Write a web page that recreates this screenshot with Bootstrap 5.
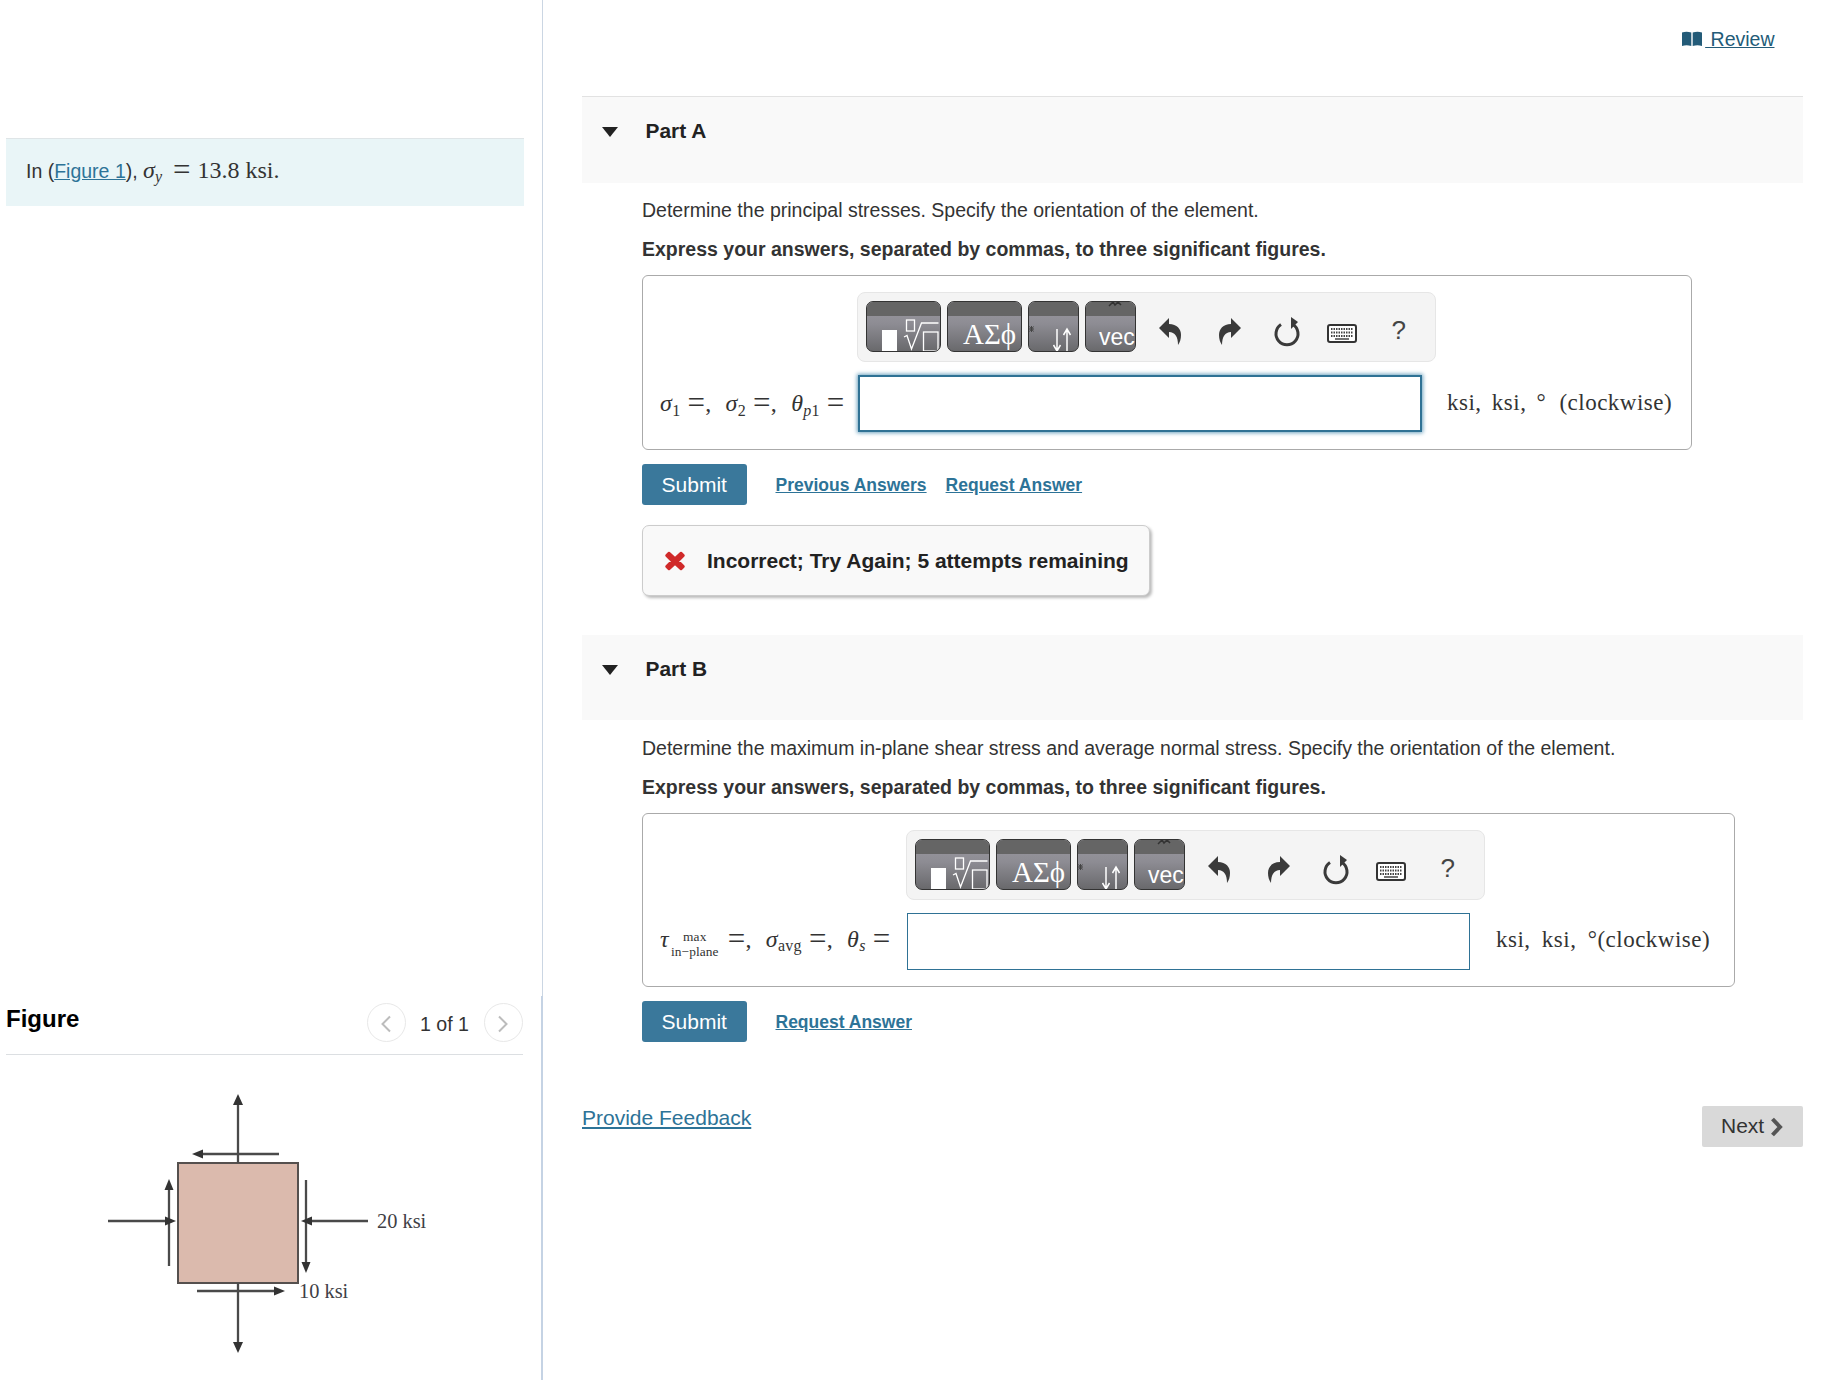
<!DOCTYPE html>
<html lang="en">
<head>
<meta charset="utf-8">
<title>Part A and Part B</title>
<link href="https://cdn.jsdelivr.net/npm/bootstrap@5.3.0/dist/css/bootstrap.min.css" rel="stylesheet">
<style>
html,body{height:1380px;overflow:hidden;background:#fff}
body{font-family:"Liberation Sans",Arial,sans-serif;font-size:19.5px;color:#333;line-height:28px}
a{color:#2d7397}
.shell{height:1380px}
.side{width:542.5px;flex:none}
.side-top{height:996px;border-right:1px solid #cbd6e3;padding:138px 18px 0 6px}
.intro{height:68px;background:#e9f5f7;border-top:1px solid #dfe5e7;padding:17px 0 0 20px;white-space:nowrap}
.mth{font-family:"Liberation Serif",serif;font-size:24px;color:#333}
.mth i{font-style:italic}
.mth sub{font-size:16px;bottom:-.28em}
.eqs{font-size:31px;line-height:0;vertical-align:-2px}
.intro .eqs{margin:0 1px 0 5px}
.side-fig{flex:1;border-right:2px solid #c5d3e4;padding:0 18px 0 6px}
.fig-head{height:59px;border-bottom:1px solid #dcdfe2}
.fig-title{font-size:24px;font-weight:700;color:#000;line-height:28px;margin-top:9px}
.pager{font-size:19.6px;color:#333;margin-top:7px}
.pg-btn{width:39px;height:39px;border:1px solid #e8e8e8;border-radius:50%;background:#fff;padding:0}
.pg-count{width:78px;text-align:center;padding-top:7px}
.fig-art{display:block;margin:25px 0 0 74px}
.fig-lbl{font-family:"Liberation Serif",serif;font-size:20.4px;fill:#3f3f46}
.mainc{flex:1;padding:0 37.500px 0 39.5px;min-width:0}
.rev-row{height:95.5px;padding:25px 28px 0 0}
.rev-row a{color:#235b78}
.rev-book{margin:0 3px 3px 0}
.part{background:#f9f9f9;height:87.5px;padding:20px 0 0 20px;font-weight:700;color:#222;font-size:20.9px}
.part-a{border-top:1px solid #e2e2e2}
.part-b{height:85px}
.part-b-gap{margin-top:39px}
.tri{width:16px;height:10px;margin:10px 27.5px 0 0;flex:none}
.body-w{padding-left:60px}
.ques{margin:13px 0 11px}
.ques-b{margin-top:14px}
.mathbox{border:1px solid #aaa;border-radius:6px;margin-top:12px;padding:16px 0 17px 17px;display:grid}
.box-a{width:1050px;grid-template-columns:198px 564px auto;height:175px}
.box-b{width:1092.5px;grid-template-columns:247px 563px auto;height:174px}
.tools{grid-column:2 / 4;justify-self:start;width:579px;height:70px;background:#f4f4f4;border:1px solid #e6e6e6;border-radius:8px;margin:0 0 12px -1px;padding:8px 0 0 8px;gap:6px}
.mq{position:relative;height:51px;border:1px solid #333;border-radius:7px;overflow:hidden;background:linear-gradient(#9c9aa2 0,#8d8c93 45%,#69696c 100%);color:#fff;flex:none}
.mq::before{content:"";display:block;height:14px;background:#656565}
.mq svg{position:absolute;left:0;top:0}
.mq-w{width:75px}
.mq-n{width:51px}
.mq-sym{position:absolute;left:15px;top:12px;font-family:"Liberation Serif",serif;font-size:29px;line-height:40px;white-space:nowrap}
.mq-vec{position:absolute;left:13px;top:18px;font-size:23px;line-height:34px}
.tool-i{flex:none;display:block;margin-top:16px}
.t-und{margin-left:17px}
.t-red{margin-left:31.5px}
.t-rst{margin-left:26px;margin-top:15px}
.t-kbd{margin:23px 0 0 20.5px}
.tool-q{font-size:26px;line-height:30px;color:#444;margin:14px 0 0 28.5px}
.anslbl{align-self:center;white-space:nowrap;letter-spacing:.3px}
.anslbl .sep{margin-right:14px}
.anslbl .eqs{margin-left:7px}
.ansinp{height:57px;border:1px solid #2f7295;background:#fff;display:block;width:100%}
.inp-focus{border-width:2px;box-shadow:0 0 4px 1px #6ca3c0}
.inp-b{height:57px;margin-top:1px}
.units{font-size:23px;align-self:center;margin-left:25px;white-space:nowrap;word-spacing:4px;letter-spacing:.5px}
.deg{margin:0 3px 0 10px}
.units-b{margin:0 0 3px 26px;word-spacing:5px;letter-spacing:.5px}
.tau-s{display:inline-flex;flex-direction:column;align-items:center;vertical-align:middle;font-size:13.4px;line-height:15px;margin:6px 0 0 2px;letter-spacing:.1px}
.tau-s+.eqs{margin-left:9px}
.act{margin-top:14px;height:41px}
.btn-sub{background:#3a789b;color:#fff;border:0;border-radius:3px;width:104.5px;height:41px;padding:0;font-size:21px}
.act a{font-size:17.5px;font-weight:700}
.act a+a{margin-left:19px}
.act .btn-sub{margin-right:29px}
.fb{display:inline-flex;align-items:center;margin-top:20px;width:508px;height:71px;background:#f9f9f9;border:1px solid #ccc;border-radius:7px;box-shadow:2px 2px 3px #bbb;font-weight:700;color:#222;padding-left:21px;font-size:21px}
.fb svg{margin-right:21px;flex:none}
.foot{margin-top:63.5px}
.foot a{font-size:21px;margin-top:-2px}
.btn-nx{background:#d9d9d9;color:#333;border:0;border-radius:2px;width:101px;height:41px;padding:0;font-size:21px}
</style>
</head>
<body>
<div class="shell d-flex">
  <aside class="side d-flex flex-column">
    <div class="side-top">
      <div class="intro">In (<a href="#">Figure 1</a>), <span class="mth"><i>σ<sub>y</sub></i> <span class="eqs">=</span> 13.8 ksi.</span></div>
    </div>
    <div class="side-fig">
      <div class="fig-head d-flex justify-content-between align-items-start">
        <div class="fig-title">Figure</div>
        <div class="pager d-flex">
          <button class="pg-btn" aria-label="Previous"><svg width="12" height="18" viewBox="0 0 12 18"><path d="M10 1.500 2.500 9 10 16.500" fill="none" stroke="#bcbcbc" stroke-width="2"/></svg></button>
          <div class="pg-count">1 of 1</div>
          <button class="pg-btn" aria-label="Next"><svg width="12" height="18" viewBox="0 0 12 18"><path d="M2 1.500 9.500 9 2 16.500" fill="none" stroke="#bcbcbc" stroke-width="2"/></svg></button>
        </div>
      </div>
      <svg class="fig-art" width="400" height="290" viewBox="0 0 400 290">
        <rect x="98" y="83" width="120" height="120" fill="#dbbaad" stroke="#55504e" stroke-width="2"/>
        <g stroke="#4a4a4a" stroke-width="2.300" fill="none">
          <path d="M158 83V20"/><path d="M158 203V268"/>
          <path d="M28 141H92"/><path d="M288 141H228"/>
          <path d="M120 74H199"/><path d="M197 211H117"/>
          <path d="M89 186V110"/><path d="M226 100V182"/>
        </g>
        <g fill="#333">
          <path d="M158 14l-5 11h10z"/><path d="M158 273l-5-11h10z"/>
          <path d="M96 141l-11-4.500v9z"/><path d="M221 141l11-4.500v9z"/>
          <path d="M112 74l11-4.500v9z"/><path d="M205 211l-11-4.500v9z"/>
          <path d="M89 99l-4.500 11h9z"/><path d="M226 193l-4.500-11h9z"/>
        </g>
        <text class="fig-lbl" x="297" y="148">20 ksi</text>
        <text class="fig-lbl" x="219" y="218">10 ksi</text>
      </svg>
    </div>
  </aside>

  <main class="mainc">
    <div class="rev-row text-end">
      <svg width="20" height="16" viewBox="0 0 20 16" class="rev-book"><path d="M0 1.500C3 .5 6 .5 9.300 1.500V15C6 14 3 14 0 15zM10.700 1.500C14 .5 17 .5 20 1.500V15C17 14 14 14 10.700 15z" fill="#235b78"/></svg><a href="#">&nbsp;Review</a>
    </div>

    <div class="part part-a d-flex align-items-start">
      <svg class="tri" viewBox="0 0 16 10"><path d="M0 0h16L8 10z" fill="#222"/></svg><span>Part A</span>
    </div>
    <div class="body-w">
      <p class="ques">Determine the principal stresses. Specify the orientation of the element.</p>
      <p class="mb-0 fw-bold">Express your answers, separated by commas, to three significant figures.</p>
      <div class="mathbox box-a">
        <div></div>
        <div class="tools d-flex">
          <div class="mq mq-w"><svg width="75" height="51" viewBox="0 0 75 51"><rect x="15" y="28" width="15" height="23" fill="#fff"/><g fill="none" stroke="#fff" stroke-width="1.300"><rect x="39.500" y="18" width="8" height="11"/><path d="M37 35l3-1.500 4.500 13.500L54.500 21H71.500"/><rect x="56.500" y="30" width="14.500" height="19"/></g></svg></div>
          <div class="mq mq-w"><div class="mq-sym">ΑΣϕ</div></div>
          <div class="mq mq-n"><svg width="51" height="51" viewBox="0 0 51 51"><g fill="none" stroke="#fff" stroke-width="1.500"><path d="M28 27v22M24.500 43l3.500 6 3.500-6"/><path d="M38 49V27M34.500 33l3.500-6 3.500 6"/></g><path d="M0 27h5M2.500 24v6M.5 24.500l4 5M4.500 24.500l-4 5" stroke="#444"/></svg></div>
          <div class="mq mq-n"><svg width="51" height="51" viewBox="0 0 51 51"><path d="M23 4l4-4 2 3 3-3 3 3" fill="none" stroke="#333" stroke-width="1.500"/></svg><div class="mq-vec">vec</div></div>
          <svg class="tool-i t-und" width="22" height="30" viewBox="0 0 22 30"><path d="M0 11 10 1v6c8 0 12 5 12 11 0 4-1 7-3 10 0-8-3-13-9-13v6z" fill="#3a3a3a"/></svg>
          <svg class="tool-i t-red" width="22" height="30" viewBox="0 0 22 30"><path d="M22 11 12 1v6C4 7 0 12 0 18c0 4 1 7 3 10 0-8 3-13 9-13v6z" fill="#3a3a3a"/></svg>
          <svg class="tool-i t-rst" width="28" height="34" viewBox="0 0 28 34"><path d="M8 8.500a11 11 0 1 0 12 0" fill="none" stroke="#3a3a3a" stroke-width="3"/><path d="M18 1v12l7-7z" fill="#3a3a3a"/></svg>
          <svg class="tool-i t-kbd" width="30" height="20" viewBox="0 0 30 20"><rect x="1" y="1" width="28" height="17" rx="2" fill="#fff" stroke="#333" stroke-width="2"/><path d="M4 5h22M4 8.500h22M4 12h22" stroke="#444" stroke-width="2" stroke-dasharray="1.500 1"/><path d="M8 15h14" stroke="#444" stroke-width="1.500"/></svg>
          <div class="tool-q">?</div>
        </div>
        <div class="anslbl mth"><i>σ</i><sub>1</sub><span class="eqs">=</span><span class="sep">,</span><i>σ</i><sub>2</sub><span class="eqs">=</span><span class="sep">,</span><i>θ<sub>p</sub></i><sub>1</sub><span class="eqs">=</span></div>
        <div class="ansinp inp-focus"></div>
        <div class="units mth">ksi, ksi,<span class="deg">°</span> (clockwise)</div>
      </div>
      <div class="act d-flex align-items-center">
        <button class="btn-sub">Submit</button>
        <a href="#">Previous Answers</a><a href="#">Request Answer</a>
      </div>
      <div class="fb">
        <svg width="22" height="22" viewBox="0 0 22 22"><path d="M5 3 11 8.500 17 3 19.500 5.500 14 11l5.500 5.500L17 19l-6-5.500L5 19l-2.500-2.500L8 11 2.500 5.500z" fill="#d02a2a" stroke="#d02a2a" stroke-width="2.500" stroke-linejoin="round"/></svg>
        Incorrect; Try Again; 5 attempts remaining
      </div>
    </div>

    <div class="part part-b part-b-gap d-flex align-items-start">
      <svg class="tri" viewBox="0 0 16 10"><path d="M0 0h16L8 10z" fill="#222"/></svg><span>Part B</span>
    </div>
    <div class="body-w">
      <p class="ques ques-b">Determine the maximum in-plane shear stress and average normal stress. Specify the orientation of the element.</p>
      <p class="mb-0 fw-bold">Express your answers, separated by commas, to three significant figures.</p>
      <div class="mathbox box-b">
        <div></div>
        <div class="tools d-flex">
          <div class="mq mq-w"><svg width="75" height="51" viewBox="0 0 75 51"><rect x="15" y="28" width="15" height="23" fill="#fff"/><g fill="none" stroke="#fff" stroke-width="1.300"><rect x="39.500" y="18" width="8" height="11"/><path d="M37 35l3-1.500 4.500 13.500L54.500 21H71.500"/><rect x="56.500" y="30" width="14.500" height="19"/></g></svg></div>
          <div class="mq mq-w"><div class="mq-sym">ΑΣϕ</div></div>
          <div class="mq mq-n"><svg width="51" height="51" viewBox="0 0 51 51"><g fill="none" stroke="#fff" stroke-width="1.500"><path d="M28 27v22M24.500 43l3.500 6 3.500-6"/><path d="M38 49V27M34.500 33l3.500-6 3.500 6"/></g><path d="M0 27h5M2.500 24v6M.5 24.500l4 5M4.500 24.500l-4 5" stroke="#444"/></svg></div>
          <div class="mq mq-n"><svg width="51" height="51" viewBox="0 0 51 51"><path d="M23 4l4-4 2 3 3-3 3 3" fill="none" stroke="#333" stroke-width="1.500"/></svg><div class="mq-vec">vec</div></div>
          <svg class="tool-i t-und" width="22" height="30" viewBox="0 0 22 30"><path d="M0 11 10 1v6c8 0 12 5 12 11 0 4-1 7-3 10 0-8-3-13-9-13v6z" fill="#3a3a3a"/></svg>
          <svg class="tool-i t-red" width="22" height="30" viewBox="0 0 22 30"><path d="M22 11 12 1v6C4 7 0 12 0 18c0 4 1 7 3 10 0-8 3-13 9-13v6z" fill="#3a3a3a"/></svg>
          <svg class="tool-i t-rst" width="28" height="34" viewBox="0 0 28 34"><path d="M8 8.500a11 11 0 1 0 12 0" fill="none" stroke="#3a3a3a" stroke-width="3"/><path d="M18 1v12l7-7z" fill="#3a3a3a"/></svg>
          <svg class="tool-i t-kbd" width="30" height="20" viewBox="0 0 30 20"><rect x="1" y="1" width="28" height="17" rx="2" fill="#fff" stroke="#333" stroke-width="2"/><path d="M4 5h22M4 8.500h22M4 12h22" stroke="#444" stroke-width="2" stroke-dasharray="1.500 1"/><path d="M8 15h14" stroke="#444" stroke-width="1.500"/></svg>
          <div class="tool-q">?</div>
        </div>
        <div class="anslbl mth"><i>τ</i><span class="tau-s"><span>max</span><span>in−plane</span></span><span class="eqs">=</span><span class="sep">,</span><i>σ</i><sub>avg</sub><span class="eqs">=</span><span class="sep">,</span><i>θ<sub>s</sub></i><span class="eqs">=</span></div>
        <div class="ansinp inp-b"></div>
        <div class="units units-b mth">ksi, ksi, °(clockwise)</div>
      </div>
      <div class="act d-flex align-items-center">
        <button class="btn-sub">Submit</button>
        <a href="#">Request Answer</a>
      </div>
    </div>

    <div class="foot d-flex justify-content-between align-items-start">
      <a href="#">Provide Feedback</a>
      <button class="btn-nx">Next <svg width="13" height="20" viewBox="0 0 13 20"><path d="M2.500 2l7.500 8-7.500 8" fill="none" stroke="#555" stroke-width="4"/></svg></button>
    </div>
  </main>
</div>
<script src="https://cdn.jsdelivr.net/npm/bootstrap@5.3.0/dist/js/bootstrap.bundle.min.js"></script>
</body>
</html>
